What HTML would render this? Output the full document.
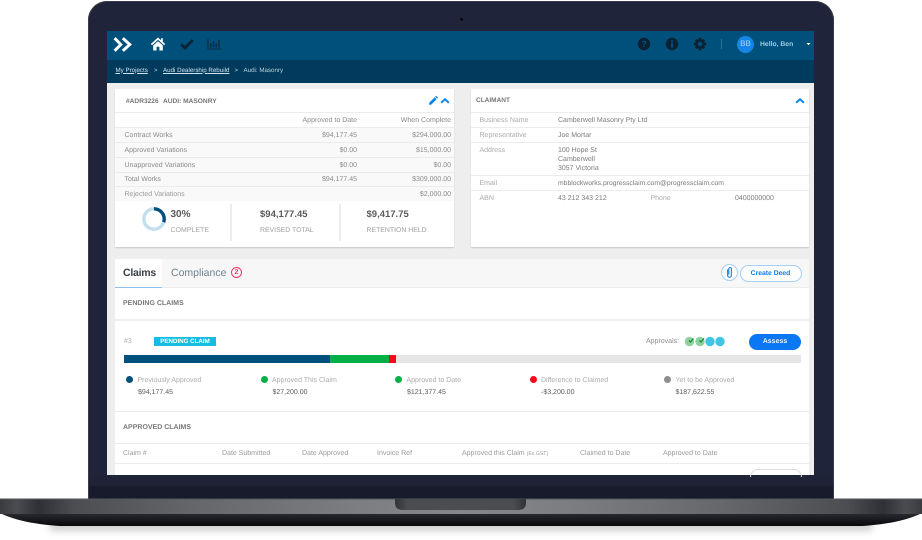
<!DOCTYPE html>
<html>
<head>
<meta charset="utf-8">
<style>
html,body{margin:0;padding:0;background:#fff;}
#p{position:relative;width:922px;height:540px;overflow:hidden;background:#fff;font-family:"Liberation Sans",sans-serif;text-rendering:geometricPrecision;}
#p div,#p span.t{position:absolute;}
.t{position:absolute;white-space:nowrap;font-size:7px;line-height:10px;color:#8a8a8a;margin-top:1px;filter:blur(.25px);}
.r{text-align:right;}
.b{font-weight:bold;color:#777;}
.l{position:absolute;height:1px;background:#ececec;}
.a{color:#aaa;}
.v{color:#5a5a5a;}
svg{position:absolute;}
</style>
</head>
<body>
<div id="p">
<!-- shadow -->
<div style="left:50px;top:522px;width:822px;height:8px;background:#888;filter:blur(4px);opacity:.5;"></div>
<!-- lid -->
<div style="left:88px;top:1px;width:746px;height:500px;background:#20243a;border-radius:19px 19px 0 0;box-shadow:inset 0 0 0 1px #3a3d48;"></div>
<div style="left:89px;top:475px;width:744px;height:11px;background:#1f2338;"></div>
<div style="left:89px;top:486px;width:744px;height:13px;background:#181b2b;"></div>
<div style="left:459.5px;top:17.5px;width:3px;height:3px;border-radius:50%;background:#05060a;"></div>
<!-- base -->
<svg style="left:0;top:498px" width="922" height="30" viewBox="0 0 922 30">
<defs>
<linearGradient id="g1" x1="0" x2="1" y1="0" y2="0">
<stop offset="0" stop-color="#3a3b40"/><stop offset=".018" stop-color="#4b4c50"/><stop offset=".042" stop-color="#2f3036"/><stop offset=".08" stop-color="#4c4d51"/><stop offset=".22" stop-color="#67686c"/><stop offset=".38" stop-color="#7c7d81"/><stop offset=".5" stop-color="#86878b"/><stop offset=".62" stop-color="#7c7d81"/><stop offset=".78" stop-color="#67686c"/><stop offset=".92" stop-color="#4c4d51"/><stop offset=".958" stop-color="#2f3036"/><stop offset=".982" stop-color="#4b4c50"/><stop offset="1" stop-color="#3a3b40"/>
</linearGradient>
<linearGradient id="g2" x1="0" x2="0" y1="0" y2="1">
<stop offset="0" stop-color="#2a2b31"/><stop offset="1" stop-color="#08080a"/>
</linearGradient>
<linearGradient id="g3" x1="0" x2="1" y1="0" y2="0">
<stop offset="0" stop-color="#323338"/><stop offset=".1" stop-color="#4c4d51"/><stop offset=".9" stop-color="#4c4d51"/><stop offset="1" stop-color="#323338"/>
</linearGradient>
</defs>
<path d="M0 15 C12 21 30 26 60 28 L862 28 C892 26 910 21 922 15 Z" fill="url(#g2)"/>
<path d="M0 1 L922 1 L922 16 L0 16 Z" fill="url(#g1)"/>
<path d="M0 1 L922 1" stroke="#55565a" stroke-width="1"/>
<path d="M395 1 L526 1 L526 5 Q526 12 518 12 L403 12 Q395 12 395 5 Z" fill="url(#g3)"/>
</svg>

<!-- screen -->
<div style="left:107px;top:31px;width:707px;height:444px;background:#eee;overflow:hidden;">
<div style="left:0;top:0;width:707px;height:29px;background:#00507c;"></div>
<div style="left:0;top:29px;width:707px;height:23px;background:#003a5c;"></div>
</div>

<!-- header icons -->
<svg style="left:113px;top:37px" width="20" height="15" viewBox="0 0 20 15"><path d="M1.6 1.2 L7.8 7.5 L1.6 13.8 M9.8 1.2 L16.8 7.5 L9.8 13.8" fill="none" stroke="#fff" stroke-width="2.9"/></svg>
<svg style="left:150px;top:37px" width="16" height="14" viewBox="0 0 16 14"><path d="M8 0.5 L0.8 7 L2 8.2 L8 2.8 L14 8.2 L15.2 7 L12.8 4.8 L12.8 1.2 L11 1.2 L11 3.2 Z M3.2 8.4 L8 4.2 L12.8 8.4 L12.8 13.5 L9.4 13.5 L9.4 9.8 L6.6 9.8 L6.6 13.5 L3.2 13.5 Z" fill="#fff"/></svg>
<svg style="left:180px;top:38px" width="14" height="12" viewBox="0 0 14 12"><path d="M1.2 6.2 L5 10 L12.8 2" fill="none" stroke="#0b2234" stroke-width="2.8"/></svg>
<svg style="left:207px;top:38px" width="15" height="12" viewBox="0 0 15 12"><path d="M1 0.5 V11 H14.5" fill="none" stroke="#0b2c48" stroke-width="1.1"/><path d="M3.8 5 V9.5 M6.5 3 V9.5 M9.2 5 V9.5 M12 2 V9.5" stroke="#0b2c48" stroke-width="1.5"/></svg>

<svg style="left:637px;top:37px" width="14" height="14" viewBox="0 0 14 14"><circle cx="7" cy="7" r="6.2" fill="#0b2234"/><text x="7" y="10.2" text-anchor="middle" font-family="Liberation Sans" font-weight="bold" font-size="9" fill="#00507c">?</text></svg>
<svg style="left:665px;top:37px" width="14" height="14" viewBox="0 0 14 14"><circle cx="7" cy="7" r="6.2" fill="#0b2234"/><rect x="6" y="6" width="2" height="4.6" fill="#00507c"/><rect x="6" y="3.4" width="2" height="1.8" fill="#00507c"/></svg>
<svg style="left:693px;top:37px" width="14" height="14" viewBox="0 0 14 14"><circle cx="7" cy="7" r="3.6" fill="none" stroke="#0b2234" stroke-width="2.8"/><path d="M7 0.8 V3 M7 11 V13.2 M0.8 7 H3 M11 7 H13.2 M2.6 2.6 L4.2 4.2 M9.8 9.8 L11.4 11.4 M2.6 11.4 L4.2 9.8 M9.8 4.2 L11.4 2.6" stroke="#0b2234" stroke-width="2.4"/></svg>
<div style="left:721px;top:39px;width:1px;height:10px;background:#2f7396;"></div>
<div style="left:737px;top:35.5px;width:17px;height:17px;border-radius:50%;background:#1585e8;"></div>
<span class="t" style="left:737px;top:38px;width:17px;text-align:center;font-size:8px;color:#a9d7f5;">BB</span>
<span class="t" style="left:760px;top:38.5px;font-weight:bold;color:#9fcfe4;font-size:6.8px;">Hello, Ben</span>
<svg style="left:806px;top:42px" width="5" height="4" viewBox="0 0 5 4"><path d="M0.5 1 H4.5 L2.5 3.2 Z" fill="#fff"/></svg>

<!-- breadcrumb -->
<span class="t" style="left:115.5px;top:64.5px;font-size:6.2px;color:#cfe3ee;text-decoration:underline;">My Projects</span>
<span class="t" style="left:154px;top:64.5px;font-size:6px;color:#cfe3ee;">&gt;</span>
<span class="t" style="left:163px;top:64.5px;font-size:6.2px;color:#cfe3ee;text-decoration:underline;">Audi Dealership Rebuild</span>
<span class="t" style="left:234.5px;top:64.5px;font-size:6px;color:#cfe3ee;">&gt;</span>
<span class="t" style="left:243.5px;top:64.5px;font-size:6.2px;color:#b9d2df;">Audi: Masonry</span>

<!-- left card -->
<div style="left:115px;top:89px;width:339px;height:158px;background:#fff;box-shadow:0 1px 1px #c8c8c8;"></div>
<div style="left:115px;top:128px;width:339px;height:73px;background:#f9f9f9;"></div>
<span class="t b" style="left:126px;top:96px;font-size:6.6px;">#ADR3226</span>
<span class="t b" style="left:163px;top:96px;font-size:6.6px;">AUDI: MASONRY</span>
<svg style="left:428px;top:95px" width="10" height="11" viewBox="0 0 10 11"><path d="M1 9.8 L1.3 7.6 L6.6 2.3 L8.6 4.3 L3.3 9.6 Z M7.2 1.7 L8.1 0.8 L10 2.7 L9.1 3.7 Z" fill="#0a84ee"/></svg>
<svg style="left:440px;top:97px" width="10" height="8" viewBox="0 0 10 8"><path d="M1.2 5.8 L5 2.2 L8.8 5.8" fill="none" stroke="#0a84ee" stroke-width="2"/></svg>
<div class="l" style="left:115px;top:112px;width:339px;"></div>
<div class="l" style="left:115px;top:127px;width:339px;"></div>
<div class="l" style="left:115px;top:142px;width:339px;"></div>
<div class="l" style="left:115px;top:157px;width:339px;"></div>
<div class="l" style="left:115px;top:172px;width:339px;"></div>
<div class="l" style="left:115px;top:186px;width:339px;"></div>

<span class="t r" style="right:565px;top:115px;">Approved to Date</span>
<span class="t r" style="right:471px;top:115px;">When Complete</span>

<span class="t" style="left:124.5px;top:130px;">Contract Works</span>
<span class="t r" style="right:565px;top:130px;">$94,177.45</span>
<span class="t r" style="right:471px;top:130px;">$294,000.00</span>

<span class="t" style="left:124.5px;top:145px;">Approved Variations</span>
<span class="t r" style="right:565px;top:145px;">$0.00</span>
<span class="t r" style="right:471px;top:145px;">$15,000.00</span>

<span class="t" style="left:124.5px;top:160px;">Unapproved Variations</span>
<span class="t r" style="right:565px;top:160px;">$0.00</span>
<span class="t r" style="right:471px;top:160px;">$0.00</span>

<span class="t" style="left:124.5px;top:174px;">Total Works</span>
<span class="t r" style="right:565px;top:174px;">$94,177.45</span>
<span class="t r" style="right:471px;top:174px;">$309,000.00</span>

<span class="t a" style="left:124.5px;top:189px;color:#999;">Rejected Variations</span>
<span class="t r" style="right:471px;top:189px;">$2,000.00</span>

<svg style="left:140px;top:205px" width="28" height="28" viewBox="0 0 28 28"><circle cx="14" cy="14" r="10.2" fill="none" stroke="#c2e0ec" stroke-width="3.4"/><circle cx="14" cy="14" r="10.2" fill="none" stroke="#00507c" stroke-width="3.4" stroke-dasharray="19.2 64.1" transform="rotate(-90 14 14)"/></svg>
<span class="t" style="left:170.5px;top:208.5px;font-size:10px;font-weight:bold;color:#5a5a5a;">30%</span>
<span class="t" style="left:170.5px;top:225px;font-size:7px;color:#a0a0a0;">COMPLETE</span>
<div style="left:230px;top:204px;width:2px;height:37px;background:#ececec;"></div>
<span class="t" style="left:260px;top:208.5px;font-size:9.5px;font-weight:bold;color:#5a5a5a;">$94,177.45</span>
<span class="t" style="left:260px;top:225px;font-size:6.9px;color:#a0a0a0;">REVISED TOTAL</span>
<div style="left:339px;top:204px;width:2px;height:37px;background:#ececec;"></div>
<span class="t" style="left:366.5px;top:208.5px;font-size:9.5px;font-weight:bold;color:#5a5a5a;">$9,417.75</span>
<span class="t" style="left:366.5px;top:225px;font-size:6.9px;color:#a0a0a0;">RETENTION HELD</span>

<!-- right card -->
<div style="left:470.5px;top:89px;width:338.5px;height:158px;background:#fff;box-shadow:0 1px 1px #c8c8c8;"></div>
<span class="t b" style="left:476px;top:95px;font-size:6.5px;">CLAIMANT</span>
<svg style="left:795px;top:97px" width="10" height="8" viewBox="0 0 10 8"><path d="M1.2 5.8 L5 2.2 L8.8 5.8" fill="none" stroke="#0a84ee" stroke-width="2"/></svg>
<div class="l" style="left:471px;top:112px;width:338px;"></div>
<div class="l" style="left:471px;top:127px;width:338px;"></div>
<div class="l" style="left:471px;top:142px;width:338px;"></div>
<div class="l" style="left:471px;top:175px;width:338px;"></div>
<div class="l" style="left:471px;top:190px;width:338px;"></div>
<span class="t a" style="left:479.5px;top:115px;">Business Name</span>
<span class="t" style="left:558px;top:115px;color:#7a7a7a;">Camberwell Masonry Pty Ltd</span>
<span class="t a" style="left:479.5px;top:130px;">Representative</span>
<span class="t" style="left:558px;top:130px;color:#7a7a7a;">Joe Mortar</span>
<span class="t a" style="left:479.5px;top:145px;">Address</span>
<span class="t" style="left:558px;top:145px;color:#7a7a7a;">100 Hope St</span>
<span class="t" style="left:558px;top:154px;color:#7a7a7a;">Camberwell</span>
<span class="t" style="left:558px;top:163px;color:#7a7a7a;">3057 Victoria</span>
<span class="t a" style="left:479.5px;top:178px;">Email</span>
<span class="t" style="left:558px;top:178px;color:#7a7a7a;font-size:6.8px;">mbblockworks.progressclaim.com@progressclaim.com</span>
<span class="t a" style="left:479.5px;top:192.5px;">ABN</span>
<span class="t" style="left:558px;top:192.5px;color:#7a7a7a;">43 212 343 212</span>
<span class="t a" style="left:650.5px;top:192.5px;">Phone</span>
<span class="t" style="left:735px;top:192.5px;color:#7a7a7a;">0400000000</span>

<!-- claims panel -->
<div style="left:115px;top:259px;width:694px;height:216px;background:#fff;"></div>
<div style="left:115px;top:259px;width:694px;height:29px;background:#f7f7f7;"></div>
<div style="left:115px;top:259px;width:47px;height:28px;background:#fff;"></div>
<div class="l" style="left:162px;top:287px;width:647px;"></div>
<div style="left:115px;top:287px;width:47px;height:1px;background:#8fc0ef;"></div>
<span class="t" style="left:123px;top:265.5px;font-size:10.5px;line-height:12px;color:#3a3f48;font-weight:bold;letter-spacing:-.25px;">Claims</span>
<span class="t" style="left:171px;top:265.5px;font-size:10.5px;line-height:12px;color:#6e8494;">Compliance</span>
<div style="left:231px;top:267px;width:9px;height:9px;border:1px solid #f0386a;border-radius:50%;"></div>
<span class="t" style="left:231px;top:266.5px;width:11px;text-align:center;font-size:7px;line-height:10px;color:#f0386a;font-weight:bold;">2</span>

<div style="left:721px;top:264px;width:15px;height:15px;border:1px solid #a5cff5;border-radius:50%;background:#fff;"></div>
<svg style="left:725px;top:266px" width="9" height="13" viewBox="0 0 9 13"><path d="M2.6 3.4 V9.4 A1.9 1.9 0 0 0 6.4 9.4 V2.8 A1.3 1.3 0 0 0 3.8 2.8 V8.6" fill="none" stroke="#1585e8" stroke-width="1.1"/></svg>
<div style="left:739.5px;top:264.5px;width:60.5px;height:15.5px;border:1px solid #a5cff5;border-radius:9px;background:#fff;"></div>
<span class="t" style="left:739.5px;top:267.5px;width:62px;text-align:center;color:#0a7ff0;font-weight:bold;font-size:6.8px;">Create Deed</span>

<span class="t b" style="left:123px;top:297.5px;">PENDING CLAIMS</span>
<div style="left:115px;top:319px;width:694px;height:2px;background:#eee;"></div>

<span class="t" style="left:124px;top:336px;color:#aaa;">#3</span>
<div style="left:154px;top:337px;width:62px;height:9px;background:#16bde0;"></div>
<span class="t" style="left:154px;top:336px;width:62px;text-align:center;color:#fff;font-weight:bold;font-size:6.2px;">PENDING CLAIM</span>

<span class="t" style="left:646px;top:336px;">Approvals:</span>
<svg style="left:683px;top:335px" width="44" height="13" viewBox="0 0 44 13">
<circle cx="6.5" cy="6.5" r="4.7" fill="#8fd19e"/><circle cx="17" cy="6.5" r="4.7" fill="#8fd19e"/><circle cx="27" cy="6.5" r="4.7" fill="#40c5e4"/><circle cx="37" cy="6.5" r="4.7" fill="#40c5e4"/>
<path d="M6 5.5 L7.6 7 L10.4 3.4 M16.5 5.5 L18.1 7 L20.9 3.4" fill="none" stroke="#0b8a3a" stroke-width="1.2"/>
</svg>
<div style="left:749px;top:333.5px;width:52px;height:16px;background:#0a77f5;border-radius:8px;"></div>
<span class="t" style="left:749px;top:336px;width:52px;text-align:center;color:#e8f2ff;font-weight:bold;font-size:7px;">Assess</span>

<div style="left:124px;top:355px;width:677px;height:8px;background:#e5e5e5;"></div>
<div style="left:124px;top:355px;width:206px;height:8px;background:#00507c;"></div>
<div style="left:330px;top:355px;width:59px;height:8px;background:#03b046;"></div>
<div style="left:389px;top:355px;width:7px;height:8px;background:#f8091a;"></div>

<div style="left:126px;top:376px;width:7px;height:7px;border-radius:50%;background:#00507c;"></div>
<span class="t a" style="left:137.5px;top:374.5px;">Previously Approved</span>
<span class="t v" style="left:138px;top:386.8px;">$94,177.45</span>
<div style="left:260.5px;top:376px;width:7px;height:7px;border-radius:50%;background:#03b046;"></div>
<span class="t a" style="left:272px;top:374.5px;">Approved This Claim</span>
<span class="t v" style="left:272.5px;top:386.8px;">$27,200.00</span>
<div style="left:395px;top:376px;width:7px;height:7px;border-radius:50%;background:#03b046;"></div>
<span class="t a" style="left:406.5px;top:374.5px;">Approved to Date</span>
<span class="t v" style="left:407px;top:386.8px;">$121,377.45</span>
<div style="left:529.5px;top:376px;width:7px;height:7px;border-radius:50%;background:#f8091a;"></div>
<span class="t a" style="left:541px;top:374.5px;">Difference to Claimed</span>
<span class="t v" style="left:541px;top:386.8px;">-$3,200.00</span>
<div style="left:664px;top:376px;width:7px;height:7px;border-radius:50%;background:#8e8e8e;"></div>
<span class="t a" style="left:675.5px;top:374.5px;">Yet to be Approved</span>
<span class="t v" style="left:675.5px;top:386.8px;">$187,622.55</span>

<div class="l" style="left:115px;top:411px;width:694px;"></div>
<span class="t b" style="left:123px;top:421.5px;">APPROVED CLAIMS</span>
<div class="l" style="left:115px;top:443px;width:694px;"></div>
<span class="t" style="left:123px;top:447.5px;color:#999;">Claim #</span>
<span class="t" style="left:222px;top:447.5px;color:#999;">Date Submitted</span>
<span class="t" style="left:302px;top:447.5px;color:#999;">Date Approved</span>
<span class="t" style="left:377px;top:447.5px;color:#999;">Invoice Ref</span>
<span class="t" style="left:462px;top:447.5px;color:#999;">Approved this Claim <span style="font-size:5.2px;">(Ex GST)</span></span>
<span class="t" style="left:580px;top:447.5px;color:#999;">Claimed to Date</span>
<span class="t" style="left:663px;top:447.5px;color:#999;">Approved to Date</span>
<div class="l" style="left:115px;top:463px;width:694px;"></div>
<div style="left:750px;top:469px;width:50px;height:14px;border:1px solid #ddd;border-radius:8px;clip-path:inset(0 0 8px 0);"></div>
</div>
</body>
</html>
